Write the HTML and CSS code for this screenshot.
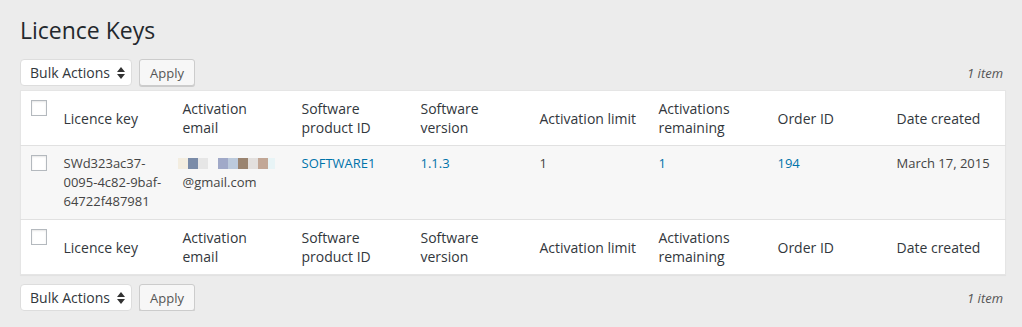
FILE: index.html
```html
<!DOCTYPE html>
<html lang="en">
<head>
    <meta charset="UTF-8">
    <title>Licence Keys</title>
    <link rel="stylesheet" href="styles.css">
</head>
<body>
    <div class="wrap">
        <h1>Licence Keys</h1>

        <div class="tablenav">
            <div class="bulk-actions">
                <div class="select">
                    <span>Bulk Actions</span>
                    <svg class="arrows" width="8" height="12" viewBox="0 0 8 12"><path d="M4 0 L8 5 H0 Z M0 7 H8 L4 12 Z" fill="#333"/></svg>
                </div>
                <button class="button">Apply</button>
            </div>
            <span class="displaying-num">1 item</span>
        </div>

        <table class="list-table">
            <colgroup>
                <col class="col-check">
                <col><col><col><col><col><col><col><col>
            </colgroup>
            <thead>
                <tr>
                    <th class="check-column"><span class="checkbox"></span></th>
                    <th>Licence key</th>
                    <th>Activation email</th>
                    <th>Software product ID</th>
                    <th>Software version</th>
                    <th>Activation limit</th>
                    <th>Activations remaining</th>
                    <th>Order ID</th>
                    <th>Date created</th>
                </tr>
            </thead>
            <tbody>
                <tr>
                    <td class="check-column"><span class="checkbox"></span></td>
                    <td>SWd323ac37-0095-4c82-9baf-64722f487981</td>
                    <td>
                        <div class="blur">
                            <i style="background:#f3ede0"></i><i style="background:#7a8ba8"></i><i style="background:#e6e6e6"></i><i style="background:transparent"></i><i style="background:#a0a9c8"></i><i style="background:#bccadc"></i><i style="background:#9a8470"></i><i style="background:#e3e0de"></i><i style="background:#c2a796"></i><i style="background:#e8f4f6;width:7px"></i>
                        </div>
                        @gmail.com
                    </td>
                    <td><a href="#">SOFTWARE1</a></td>
                    <td><a href="#">1.1.3</a></td>
                    <td>1</td>
                    <td><a href="#">1</a></td>
                    <td><a href="#">194</a></td>
                    <td>March 17, 2015</td>
                </tr>
            </tbody>
            <tfoot>
                <tr>
                    <th class="check-column"><span class="checkbox"></span></th>
                    <th>Licence key</th>
                    <th>Activation email</th>
                    <th>Software product ID</th>
                    <th>Software version</th>
                    <th>Activation limit</th>
                    <th>Activations remaining</th>
                    <th>Order ID</th>
                    <th>Date created</th>
                </tr>
            </tfoot>
        </table>

        <div class="tablenav bottom">
            <div class="bulk-actions">
                <div class="select">
                    <span>Bulk Actions</span>
                    <svg class="arrows" width="8" height="12" viewBox="0 0 8 12"><path d="M4 0 L8 5 H0 Z M0 7 H8 L4 12 Z" fill="#333"/></svg>
                </div>
                <button class="button">Apply</button>
            </div>
            <span class="displaying-num">1 item</span>
        </div>
    </div>
</body>
</html>
```

FILE: styles.css
```css
* {
    box-sizing: border-box;
}

body {
    margin: 0;
    background: #ececec;
    color: #444;
    font-family: "Open Sans", sans-serif;
    font-size: 13px;
}

.wrap {
    padding: 0 17px 0 20px;
}

h1 {
    margin: 0;
    padding: 16px 0 8px;
    font-size: 23px;
    font-weight: 400;
    line-height: 29px;
    color: #23282d;
}

.tablenav {
    display: flex;
    align-items: center;
    justify-content: space-between;
    height: 27px;
    margin: 6px 0 4px;
}

.tablenav.bottom {
    margin: 9px 0 0;
}

.bulk-actions {
    display: flex;
    align-items: center;
    gap: 7px;
}

.select {
    display: flex;
    align-items: center;
    justify-content: space-between;
    width: 112px;
    height: 27px;
    padding: 0 6px 0 9px;
    background: #fff;
    border: 1px solid #ddd;
    border-radius: 4px;
    font-size: 14px;
    color: #32373c;
}

.button {
    height: 27px;
    padding: 0 10px;
    background: #f7f7f7;
    border: 1px solid #ccc;
    border-radius: 3px;
    box-shadow: 0 1px 0 #ccc;
    font-family: inherit;
    font-size: 13px;
    color: #555;
}

.displaying-num {
    font-style: italic;
    color: #555;
    margin-right: 2px;
}

.list-table {
    width: 985px;
    border-collapse: collapse;
    table-layout: fixed;
    background: #fff;
    border: 1px solid #e5e5e5;
    box-shadow: 0 1px 1px rgba(0, 0, 0, 0.04);
}

.list-table col {
    width: 119px;
}

.list-table col.col-check {
    width: 33px;
}

.list-table th {
    padding: 8px 10px;
    text-align: left;
    font-weight: 400;
    font-size: 14px;
    line-height: 19px;
    color: #32373c;
    vertical-align: middle;
}

.list-table thead tr {
    border-bottom: 1px solid #e1e1e1;
}

.list-table tfoot tr {
    border-top: 1px solid #e1e1e1;
}

.list-table tbody tr {
    background: #f7f7f7;
}

.list-table td {
    padding: 8px 10px;
    line-height: 19px;
    vertical-align: top;
    color: #444;
    word-wrap: break-word;
}

.list-table .check-column {
    padding: 9px 0 0 10px;
    vertical-align: top;
}

.list-table td.check-column {
    padding-top: 9px;
}

.checkbox {
    display: block;
    width: 16px;
    height: 16px;
    background: #fff;
    border: 1px solid #b4b9be;
    box-shadow: inset 0 1px 2px rgba(0, 0, 0, 0.1);
}

a {
    color: #0073aa;
    text-decoration: none;
}

.blur {
    display: flex;
    height: 19px;
    align-items: center;
    margin-left: -5px;
}

.blur i {
    display: block;
    width: 10px;
    height: 11px;
}
```
